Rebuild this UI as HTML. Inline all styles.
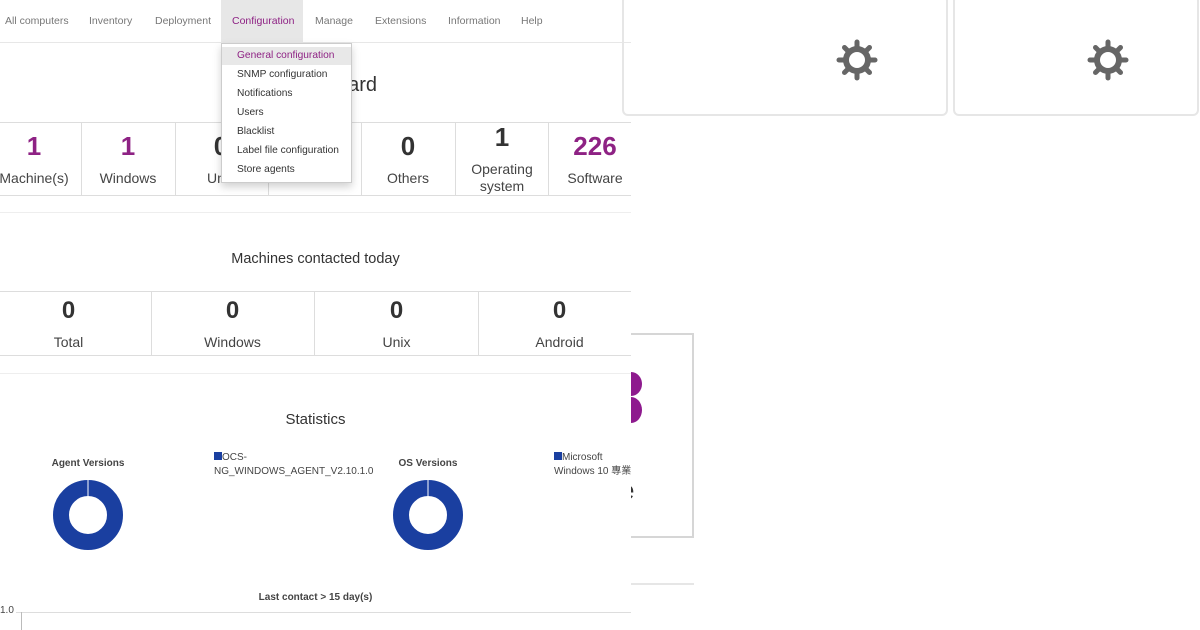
<!DOCTYPE html>
<html><head><meta charset="utf-8"><style>
*{margin:0;padding:0;box-sizing:border-box}
body{width:1200px;height:630px;overflow:hidden;background:#fff;font-family:"Liberation Sans","Noto Sans CJK TC",sans-serif;position:relative;color:#333}
.a{position:absolute;white-space:nowrap}
#left{position:absolute;left:0;top:0;width:631px;height:630px;overflow:hidden;background:#fff}
.nav{font-size:10.5px;color:#777;top:15px}
.dd{font-size:10.2px;color:#333;left:237px}
.num{font-weight:bold;font-size:26px;text-align:center;width:94px}
.lab{font-size:14px;text-align:center;width:94px;color:#444}
.n2{font-weight:bold;font-size:24px;text-align:center;width:163px}
.l2{font-size:14px;text-align:center;width:163px;color:#444}
.p{color:#8e2284}
</style></head><body>
<div id="left">
<div class="a" style="left:0;top:42px;width:631px;height:1px;background:#e7e7e7"></div>
<div class="a" style="left:221px;top:0;width:82px;height:42px;background:#e7e7e7"></div>
<div class="a nav" style="left:5px">All computers</div>
<div class="a nav" style="left:89px">Inventory</div>
<div class="a nav" style="left:155px">Deployment</div>
<div class="a nav" style="left:232px;color:#8e2284">Configuration</div>
<div class="a nav" style="left:315px">Manage</div>
<div class="a nav" style="left:375px">Extensions</div>
<div class="a nav" style="left:448px">Information</div>
<div class="a nav" style="left:521px">Help</div>

<div class="a" style="left:177px;top:74px;width:200px;text-align:right;font-size:20px;color:#333">Dashboard</div>

<div class="a" style="left:0;top:122px;width:631px;height:1px;background:#ddd"></div>
<div class="a" style="left:0;top:195px;width:631px;height:1px;background:#ddd"></div>
<div class="a" style="left:81px;top:122px;width:1px;height:73px;background:#ddd"></div>
<div class="a" style="left:175px;top:122px;width:1px;height:73px;background:#ddd"></div>
<div class="a" style="left:268px;top:122px;width:1px;height:73px;background:#ddd"></div>
<div class="a" style="left:361px;top:122px;width:1px;height:73px;background:#ddd"></div>
<div class="a" style="left:455px;top:122px;width:1px;height:73px;background:#ddd"></div>
<div class="a" style="left:548px;top:122px;width:1px;height:73px;background:#ddd"></div>

<div class="a num p" style="left:-13px;top:131px">1</div><div class="a lab" style="left:-13px;top:170px">Machine(s)</div>
<div class="a num p" style="left:81px;top:131px">1</div><div class="a lab" style="left:81px;top:170px">Windows</div>
<div class="a num" style="left:174px;top:131px">0</div><div class="a lab" style="left:174px;top:170px">Unix</div>
<div class="a num" style="left:268px;top:131px">0</div><div class="a lab" style="left:268px;top:170px">Android</div>
<div class="a num" style="left:361px;top:131px">0</div><div class="a lab" style="left:361px;top:170px">Others</div>
<div class="a num" style="left:455px;top:122px">1</div><div class="a lab" style="left:455px;top:161px;white-space:normal;line-height:17px">Operating system</div>
<div class="a num p" style="left:548px;top:131px">226</div><div class="a lab" style="left:548px;top:170px">Software</div>

<div class="a" style="left:0;top:212px;width:631px;height:1px;background:#eee"></div>
<div class="a" style="left:0;top:251px;width:631px;text-align:center;font-size:14.5px;color:#333">Machines contacted today</div>
<div class="a" style="left:0;top:291px;width:631px;height:1px;background:#ddd"></div>
<div class="a" style="left:0;top:355px;width:631px;height:1px;background:#ddd"></div>
<div class="a" style="left:151px;top:291px;width:1px;height:64px;background:#ddd"></div>
<div class="a" style="left:314px;top:291px;width:1px;height:64px;background:#ddd"></div>
<div class="a" style="left:478px;top:291px;width:1px;height:64px;background:#ddd"></div>
<div class="a n2" style="left:-13px;top:297px">0</div><div class="a l2" style="left:-13px;top:334px">Total</div>
<div class="a n2" style="left:151px;top:297px">0</div><div class="a l2" style="left:151px;top:334px">Windows</div>
<div class="a n2" style="left:315px;top:297px">0</div><div class="a l2" style="left:315px;top:334px">Unix</div>
<div class="a n2" style="left:478px;top:297px">0</div><div class="a l2" style="left:478px;top:334px">Android</div>

<div class="a" style="left:0;top:373px;width:631px;height:1px;background:#eee"></div>
<div class="a" style="left:0;top:411px;width:631px;text-align:center;font-size:15px;color:#333">Statistics</div>

<div class="a" style="left:38px;top:458px;width:100px;text-align:center;font-size:10px;font-weight:bold;color:#444">Agent Versions</div>
<svg class="a" style="left:53px;top:480px" width="70" height="70"><circle cx="35" cy="35" r="27" fill="none" stroke="#1a3fa0" stroke-width="16"/><line x1="35" y1="0" x2="35" y2="17" stroke="#fff" stroke-width="1"/></svg>
<div class="a" style="left:214px;top:451px;font-size:10px;color:#444;line-height:14px"><span style="display:inline-block;width:8px;height:8px;background:#1a3fa0"></span>OCS-<br>NG_WINDOWS_AGENT_V2.10.1.0</div>
<div class="a" style="left:378px;top:458px;width:100px;text-align:center;font-size:10px;font-weight:bold;color:#444">OS Versions</div>
<svg class="a" style="left:393px;top:480px" width="70" height="70"><circle cx="35" cy="35" r="27" fill="none" stroke="#1a3fa0" stroke-width="16"/><line x1="35" y1="0" x2="35" y2="17" stroke="#fff" stroke-width="1"/></svg>
<div class="a" style="left:554px;top:451px;font-size:10px;color:#444;line-height:14px"><span style="display:inline-block;width:8px;height:8px;background:#1a3fa0"></span>Microsoft<br>Windows 10 專業版</div>

<div class="a" style="left:0;top:592px;width:631px;text-align:center;font-size:10px;font-weight:bold;color:#444">Last contact &gt; 15 day(s)</div>
<div class="a" style="left:0;top:605px;font-size:10px;color:#444">1.0</div>
<div class="a" style="left:16px;top:612px;width:615px;height:1px;background:#ddd"></div>
<div class="a" style="left:21px;top:612px;width:1px;height:18px;background:#bbb"></div>

<div class="a" style="left:221px;top:43px;width:131px;height:140px;background:#fff;border:1px solid #ccc;box-shadow:0 4px 8px rgba(0,0,0,.18)"></div>
<div class="a" style="left:222px;top:47px;width:129px;height:18px;background:#e8e8e8"></div>
<div class="a dd" style="top:50px;color:#8e2284">General configuration</div>
<div class="a dd" style="top:69px">SNMP configuration</div>
<div class="a dd" style="top:88px">Notifications</div>
<div class="a dd" style="top:107px">Users</div>
<div class="a dd" style="top:126px">Blacklist</div>
<div class="a dd" style="top:145px">Label file configuration</div>
<div class="a dd" style="top:164px">Store agents</div>
</div>

<div class="a" style="left:622px;top:-5px;width:326px;height:121px;border:2px solid #e6e6e6;border-radius:6px"></div>
<div class="a" style="left:953px;top:-5px;width:246px;height:121px;border:2px solid #e6e6e6;border-radius:6px"></div>
<svg class="a" style="left:835px;top:38px" width="44" height="44" viewBox="0 0 44 44"><g fill="#666"><circle cx="22" cy="22" r="14"/><g stroke="#666" stroke-width="5" stroke-linecap="round"><line x1="22" y1="4" x2="22" y2="40"/><line x1="4" y1="22" x2="40" y2="22"/><line x1="9.5" y1="9.5" x2="34.5" y2="34.5"/><line x1="34.5" y1="9.5" x2="9.5" y2="34.5"/></g></g><circle cx="22" cy="22" r="8" fill="#fff"/></svg>
<svg class="a" style="left:1086px;top:38px" width="44" height="44" viewBox="0 0 44 44"><g fill="#666"><circle cx="22" cy="22" r="14"/><g stroke="#666" stroke-width="5" stroke-linecap="round"><line x1="22" y1="4" x2="22" y2="40"/><line x1="4" y1="22" x2="40" y2="22"/><line x1="9.5" y1="9.5" x2="34.5" y2="34.5"/><line x1="34.5" y1="9.5" x2="9.5" y2="34.5"/></g></g><circle cx="22" cy="22" r="8" fill="#fff"/></svg>

<div class="a" style="left:631px;top:330px;width:70px;height:260px;overflow:hidden">
<div class="a" style="left:-10px;top:3px;width:73px;height:205px;border:2px solid #d6d6d6;border-left:none"></div>
<div class="a" style="left:-11px;top:42px;width:22px;height:24px;border-radius:50%;background:#8e1a8e"></div>
<div class="a" style="left:-11px;top:67px;width:22px;height:26px;border-radius:50%;background:#8e1a8e"></div>
<div class="a" style="left:-11px;top:145px;font-size:26px;color:#333">e</div>
<div class="a" style="left:0;top:253px;width:63px;height:2px;background:#e6e6e6"></div>
</div>
</body></html>
